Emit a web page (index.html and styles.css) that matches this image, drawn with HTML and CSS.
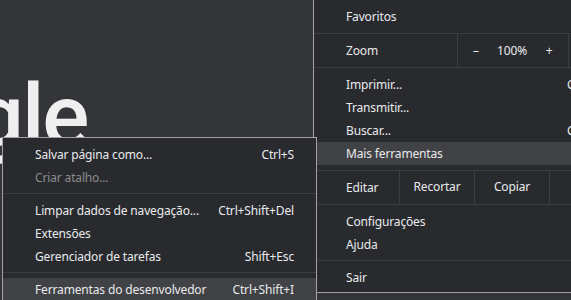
FILE: index.html
```html
<!DOCTYPE html>
<html lang="pt-BR">
<head>
<meta charset="utf-8">
<link rel="stylesheet" href="styles.css">
</head>
<body>
<div class="page">
  <div class="logo">gle</div>
</div>

<div class="menu menu-main">
  <div class="item first"><span class="label">Favoritos</span></div>
  <div class="zoom-row">
    <div class="zoom-label">Zoom</div>
    <div class="zoom-controls">
      <span class="zbtn zminus">–</span>
      <span class="zval">100%</span>
      <span class="zbtn zplus">+</span>
    </div>
    <div class="zoom-full"></div>
  </div>
  <div class="group">
    <div class="item"><span class="label">Imprimir...</span><span class="key">Ctrl+P</span></div>
    <div class="item"><span class="label">Transmitir...</span></div>
    <div class="item"><span class="label">Buscar...</span><span class="key">Ctrl+F</span></div>
    <div class="item active"><span class="label">Mais ferramentas</span></div>
  </div>
  <div class="edit-row">
    <div class="ecell elabel">Editar</div>
    <div class="ecell ebtn">Recortar</div>
    <div class="ecell ebtn">Copiar</div>
    <div class="ecell ebtn">Colar</div>
  </div>
  <div class="group-top">
    <div class="item"><span class="label">Configurações</span></div>
    <div class="item"><span class="label">Ajuda</span></div>
  </div>
  <div class="sep"></div>
  <div class="item"><span class="label">Sair</span></div>
</div>

<div class="menu menu-sub">
  <div class="sitem"><span>Salvar página como...</span><span>Ctrl+S</span></div>
  <div class="sitem disabled"><span>Criar atalho...</span></div>
  <div class="ssep"></div>
  <div class="sitem"><span>Limpar dados de navegação...</span><span>Ctrl+Shift+Del</span></div>
  <div class="sitem"><span>Extensões</span></div>
  <div class="sitem"><span>Gerenciador de tarefas</span><span>Shift+Esc</span></div>
  <div class="ssep"></div>
  <div class="sitem active"><span>Ferramentas do desenvolvedor</span><span>Ctrl+Shift+I</span></div>
</div>
</body>
</html>
```

FILE: styles.css
```css
html, body {
  margin: 0;
  padding: 0;
}
body {
  width: 571px;
  height: 300px;
  overflow: hidden;
  background: #333538;
  position: relative;
  font-family: "Noto Sans", "DejaVu Sans", sans-serif;
}
.page {
  padding-top: 72px;
}
.logo {
  font-family: "Roboto", sans-serif;
  font-size: 88px;
  font-weight: 500;
  line-height: 1;
  color: #efefef;
  margin-left: -26px;
  letter-spacing: -2px;
}

.menu {
  position: absolute;
  background: #292a2d;
  border: 1px solid #a3a3a3;
  color: #e8eaed;
  font-size: 12px;
  letter-spacing: -0.15px;
}
.menu-main {
  left: 313px;
  top: -1px;
  width: 330px;
  padding-bottom: 3px;
}
.item {
  height: 23px;
  display: flex;
  align-items: center;
  padding-left: 32px;
}
.item.first {
  height: 33px;
}
.item .label {
  width: 221px;
  flex: none;
}
.item.active {
  background: #414245;
}
.group {
  padding: 5px 0;
}
.group-top {
  padding-top: 5px;
}
.zoom-row {
  display: flex;
  height: 33px;
  border-top: 1px solid #3c3d40;
  border-bottom: 1px solid #3c3d40;
}
.zoom-label {
  width: 111px;
  padding-left: 32px;
  display: flex;
  align-items: center;
  border-right: 1px solid #3c3d40;
}
.zoom-controls {
  width: 110px;
  display: flex;
  align-items: center;
  border-right: 1px solid #3c3d40;
}
.zbtn, .zval {
  display: flex;
  justify-content: center;
}
.zminus { width: 36px; }
.zval { width: 36px; }
.zplus { width: 38px; }
.edit-row {
  display: flex;
  height: 33px;
  border-top: 1px solid #3c3d40;
  border-bottom: 1px solid #3c3d40;
}
.ecell {
  display: flex;
  align-items: center;
  border-right: 1px solid #3c3d40;
}
.elabel {
  width: 53px;
  padding-left: 32px;
}
.ebtn {
  width: 74px;
  justify-content: center;
  padding-bottom: 2px;
}
.sep {
  height: 1px;
  background: #3c3d40;
  margin: 4px 0 5px;
}

.menu-sub {
  left: 2px;
  top: 137px;
  width: 313px;
  height: 200px;
  padding-top: 5px;
}
.sitem {
  height: 23px;
  display: flex;
  align-items: center;
  justify-content: space-between;
  padding: 0 22px 0 32px;
}
.sitem.disabled {
  color: #8b8c8e;
}
.sitem.active {
  background: #414245;
}
.ssep {
  height: 1px;
  background: #3c3d40;
  margin: 4px 0 5px;
}
```
